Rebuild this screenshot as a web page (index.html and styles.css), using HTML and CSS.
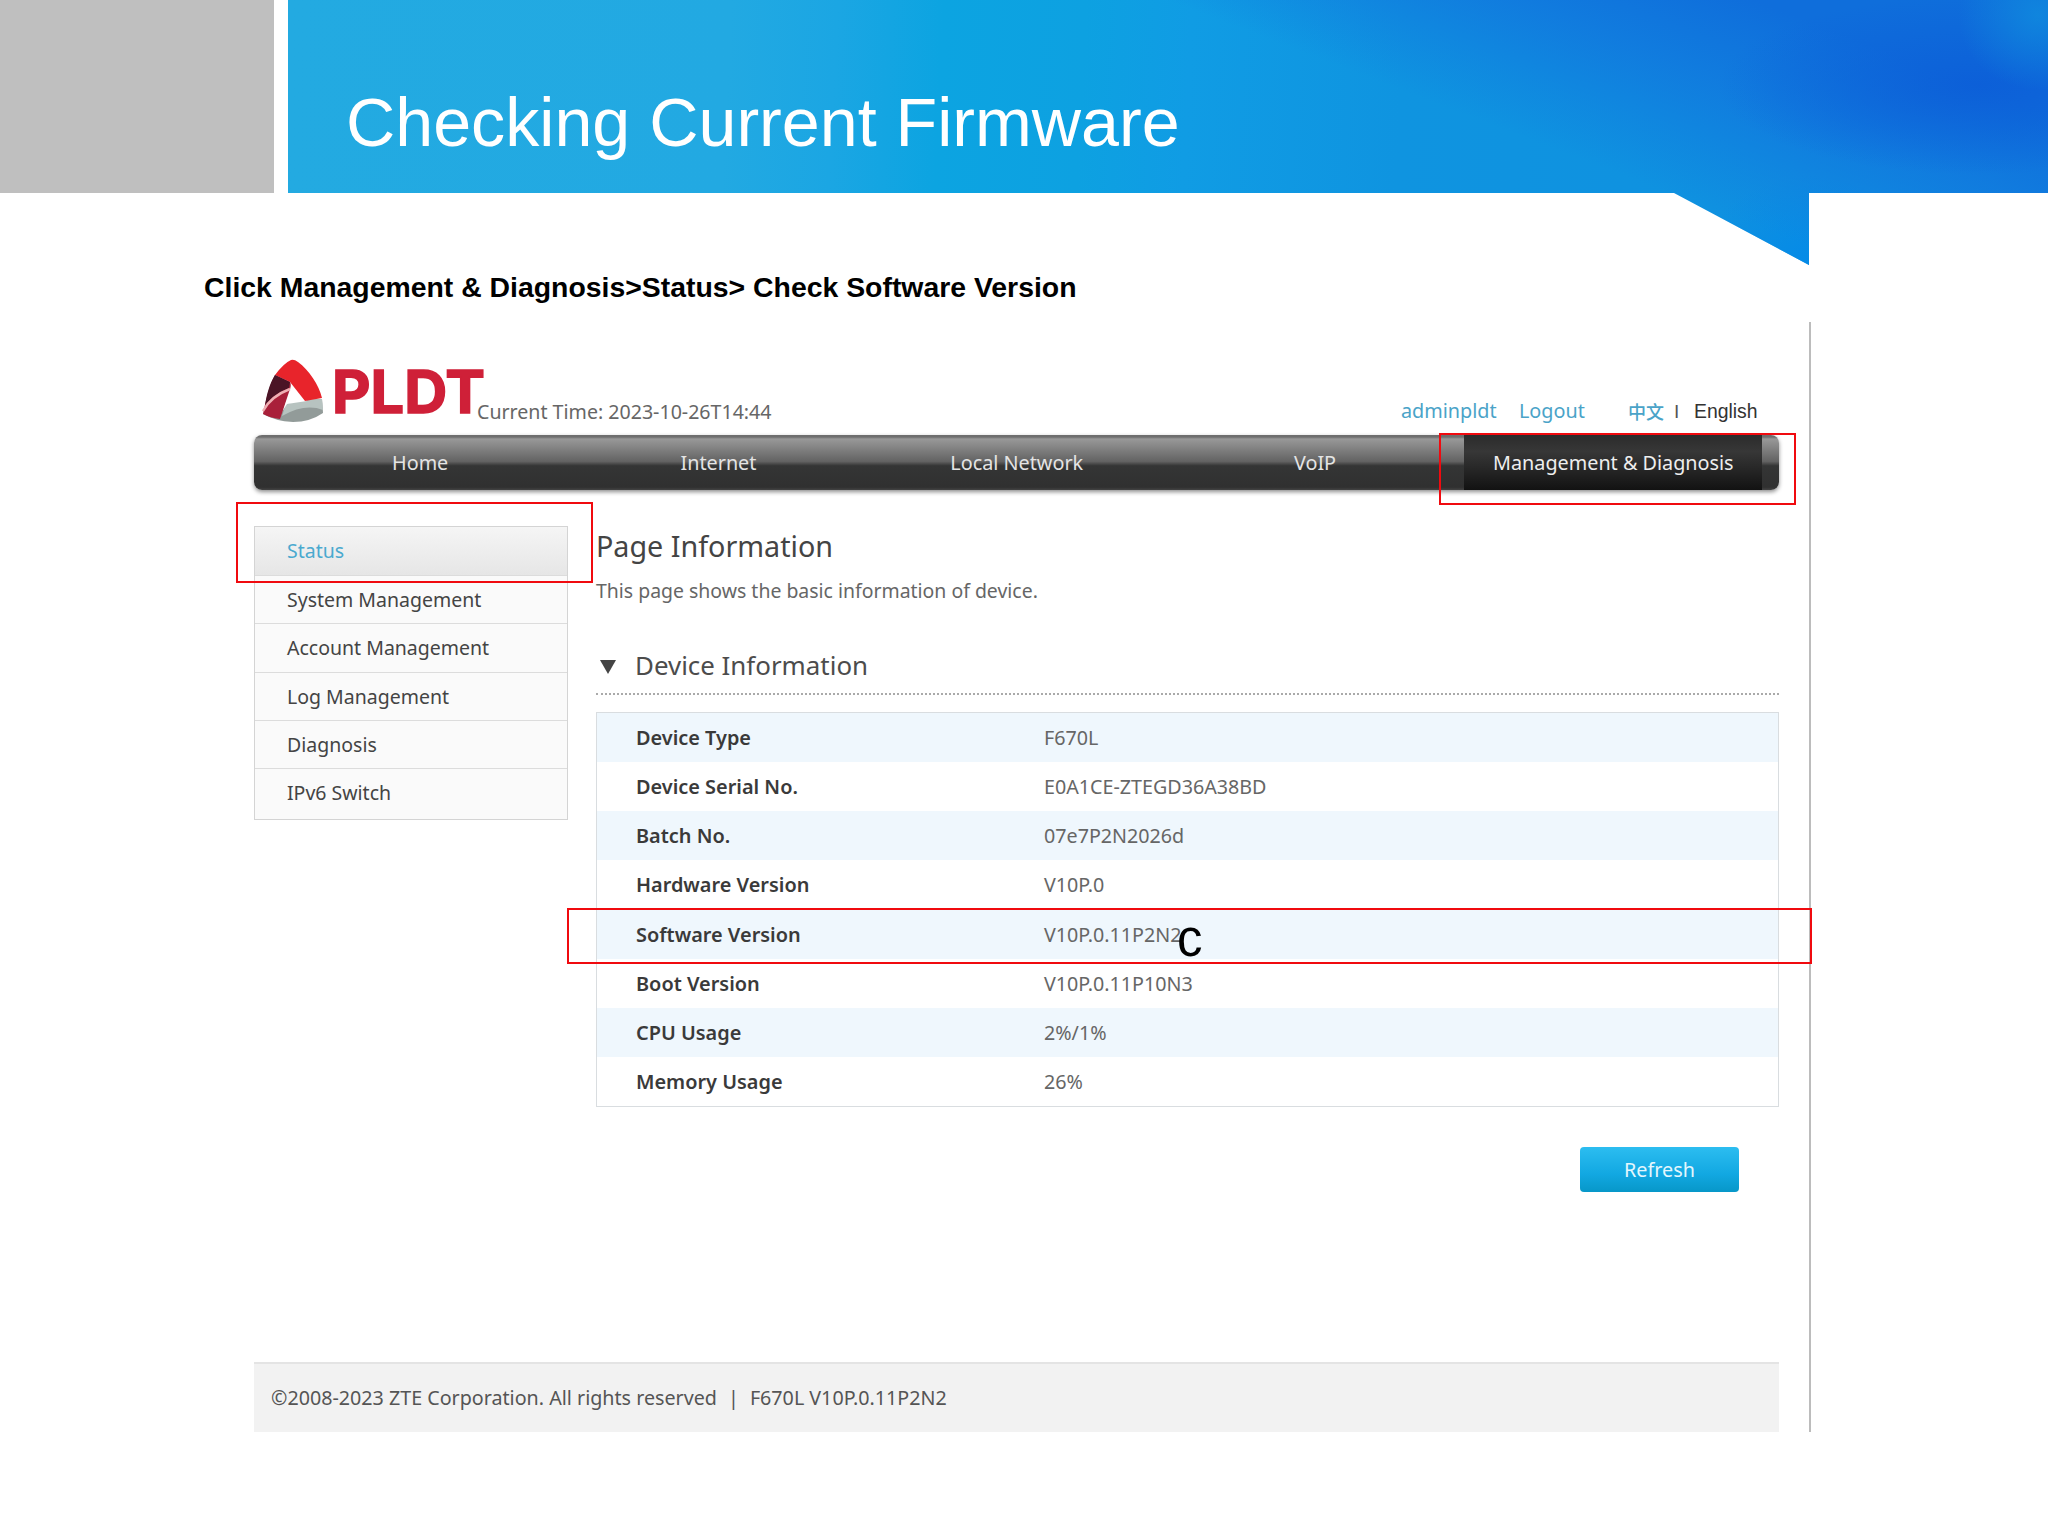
FILE: index.html
```
<!DOCTYPE html>
<html lang="en">
<head>
<meta charset="utf-8">
<title>Checking Current Firmware</title>
<link rel="stylesheet" href="styles.css">
</head>
<body>
<div class="slide">
  <header class="slide-header">
    <div class="gray-block"></div>
    <div class="banner"><h1>Checking Current Firmware</h1></div>
  </header>
  <p class="instruction">Click Management &amp; Diagnosis&gt;Status&gt; Check Software Version</p>

  <section class="router">
    <div class="topbar">
      <svg class="logo" width="224" height="70" viewBox="0 0 224 70">
        <path d="M3 58L20 45L62 43L63 57Q50 66 33 66Q15 65 3 58Z" fill="#929b99"/>
        <path d="M26 48Q42 44 62 43L63 54Q45 47 22 60Z" fill="#b7c3c0"/>
        <path d="M22 56L27 40L32 30L47 45L27 48Z" fill="#fff"/>
        <path d="M15 19Q24 7 31 4Q34 3 38 6C49 14 59 29 62 42L45 45L30 26Z" fill="#e8242b"/>
        <path d="M15 19L30 26Q32 29 29 36L20 63Q10 62 3 58C6 44 9 30 15 19Z" fill="#a9203a"/>
        <path d="M15 19L30 26L29 32Q15 37 5 49C7 38 9 29 15 19Z" fill="#4b1426"/>
        <path d="M3 55Q11 40 30 33" fill="none" stroke="#eeb0b4" stroke-width="2.5"/>
        <text class="logo-text" x="72" y="57" textLength="153" lengthAdjust="spacingAndGlyphs">PLDT</text>
      </svg>
      <span class="time">Current Time: 2023-10-26T14:44</span>
      <div class="links">
        <a>adminpldt</a><a>Logout</a><a class="zh">中文</a><span class="sep">I</span><span class="en">English</span>
      </div>
    </div>
    <nav class="nav">
      <span>Home</span><span>Internet</span><span>Local Network</span><span>VoIP</span><span class="active">Management &amp; Diagnosis</span>
    </nav>
    <div class="main">
      <ul class="side">
        <li class="current">Status</li>
        <li>System Management</li>
        <li>Account Management</li>
        <li>Log Management</li>
        <li>Diagnosis</li>
        <li>IPv6 Switch</li>
      </ul>
      <div class="content">
        <h2>Page Information</h2>
        <p class="desc">This page shows the basic information of device.</p>
        <h3><svg width="16" height="14" viewBox="0 0 16 14"><path d="M0 0H16L8 14Z" fill="#444"/></svg>Device Information</h3>
        <dl class="info">
          <div><dt>Device Type</dt><dd>F670L</dd></div>
          <div><dt>Device Serial No.</dt><dd>E0A1CE-ZTEGD36A38BD</dd></div>
          <div><dt>Batch No.</dt><dd>07e7P2N2026d</dd></div>
          <div><dt>Hardware Version</dt><dd>V10P.0</dd></div>
          <div><dt>Software Version</dt><dd>V10P.0.11P2N2</dd></div>
          <div><dt>Boot Version</dt><dd>V10P.0.11P10N3</dd></div>
          <div><dt>CPU Usage</dt><dd>2%/1%</dd></div>
          <div><dt>Memory Usage</dt><dd>26%</dd></div>
        </dl>
        <button class="refresh">Refresh</button>
      </div>
    </div>
    <footer class="foot"><span>©2008-2023 ZTE Corporation. All rights reserved</span><span class="bar">|</span><span>F670L V10P.0.11P2N2</span></footer>
  </section>

  <div class="mark mark-nav"></div>
  <div class="mark mark-status"></div>
  <div class="mark mark-version"></div>
  <span class="suffix">c</span>
</div>
</body>
</html>
```
FILE: styles.css
```
* { box-sizing: border-box; }
body { margin: 0; background: #fff; }
h1, h2, h3, p, ul, dl, dd { margin: 0; padding: 0; font-weight: 400; }
ul { list-style: none; }

.slide {
  position: relative;
  width: 2048px;
  height: 1536px;
  overflow: hidden;
  background: #fff;
  font-family: "Liberation Sans", Arial, sans-serif;
}

.slide-header { display: flex; gap: 14px; height: 265px; }
.gray-block { width: 274px; height: 193px; background: #bfbfbf; }
.banner {
  flex: 1;
  padding: 82px 0 0 58px;
  clip-path: polygon(0 0, 1760px 0, 1760px 193px, 1521px 193px, 1521px 265px, 1386px 193px, 0 193px);
  background:
    radial-gradient(ellipse 80px 75px at 1750px 15px, rgba(16,136,222,.9), rgba(16,136,222,0)),
    radial-gradient(ellipse 260px 90px at 1690px 85px, rgba(12,94,216,.9), rgba(12,94,216,0)),
    linear-gradient(21deg, rgba(16,112,220,0) 64%, rgba(17,120,222,.85) 78%, #0f6edb 88%),
    radial-gradient(ellipse 110px 90px at 1522px 265px, rgba(4,138,232,.9), rgba(4,138,232,0)),
    linear-gradient(93deg, #23aae1 0, #22a9e2 25%, #1ba6e3 31%, #0ca4e1 37%, #0da1e1 45%, #109ce4 51%, #0f94e0 63%, #0f92e0 76%, #0f8de0 100%);
}
.banner h1 { font-size: 68.2px; line-height: 80px; color: #fff; white-space: nowrap; }

.instruction {
  height: 57px;
  padding: 5px 0 0 204px;
  font-size: 28.4px;
  line-height: 34px;
  font-weight: 700;
  color: #000;
}

.router {
  display: flex;
  flex-direction: column;
  width: 1557px;
  height: 1110px;
  margin-left: 254px;
  padding-right: 30px;
  border-right: 2px solid #bcbcbc;
  font-family: "Noto Sans", "Noto Sans CJK SC", sans-serif;
  font-size: 19.8px;
  line-height: 28px;
  color: #555;
}

.topbar { display: flex; align-items: flex-end; height: 113px; padding-bottom: 9px; }
.logo { display: block; margin-left: 6px; overflow: visible; }
.logo-text { font-family: "Inter", sans-serif; font-weight: 700; font-size: 59px; fill: #cf2038; stroke: #cf2038; stroke-width: 1.5px; }
.time { margin-left: -7px; font-size: 19.6px; color: #666; }
.links {
  display: grid;
  grid-template-columns: 118px 109px 46px 20px 85px;
  margin-left: auto;
  color: #4aa3c8;
}
.links .zh { font-family: "Noto Sans CJK SC", sans-serif; font-size: 18px; font-weight: 500; }
.links .sep { padding-top: 1px; font: 19px/28px "Liberation Sans", sans-serif; color: #555; }
.links .en { font-family: "Liberation Sans", sans-serif; font-size: 19.4px; color: #333; }

.nav {
  display: grid;
  grid-template-columns: repeat(5, 298.3px);
  height: 55px;
  padding: 0 17px;
  border-radius: 8px;
  background: linear-gradient(#6e6e6e 0, #6e6e6e 2px, #989898 4px, #636363 48%, #343535 56%, #303030 95%, #444);
  box-shadow: 0 2px 4px rgba(0,0,0,.45);
  color: #e4e4e4;
  text-align: center;
  line-height: 55px;
}
.nav .active { background: linear-gradient(#2b2b2b, #373737 30%, #2a2a2a 55%, #121212); color: #eee; }

.main { display: flex; gap: 28px; margin-top: 36px; }
.side {
  display: grid;
  grid-template-rows: 49px 48px 49px 48px 48px 50px;
  width: 314px;
  height: 294px;
  border: 1px solid #d4d4d4;
  background: #fafafa;
  color: #444;
  line-height: 47px;
}
.side li { padding-left: 32px; border-bottom: 1px solid #dcdcdc; font-size: 19.5px; }
.side li:last-child { border-bottom: 0; }
.side .current { background: linear-gradient(#f5f5f5, #e6e6e6); color: #4aa9cf; line-height: 47px; }

.content { display: flex; flex-direction: column; flex: 1; }
.content h2 { font-size: 28.7px; line-height: 40px; color: #444; }
.desc { margin-top: 11px; font-size: 19.45px; color: #666; }
.content h3 {
  display: flex;
  align-items: center;
  gap: 19px;
  height: 48px;
  margin-top: 42px;
  padding: 0 0 11px 4px;
  border-bottom: 2px dotted #aaa;
  font-size: 25.9px;
  line-height: 36px;
  color: #4c4c4c;
}
.content h3 svg { position: relative; top: 2px; }
.info { margin-top: 17px; border: 1px solid #d9dde0; }
.info div { display: flex; height: 49.15px; padding-left: 39px; line-height: 49.15px; }
.info div:nth-child(odd) { background: #eff7fd; }
.info dt { width: 408px; font-weight: 600; font-size: 19.9px; color: #3a3a3a; }
.info dd { font-size: 19.7px; color: #666; }
.refresh {
  align-self: flex-end;
  width: 159px;
  height: 45px;
  margin: 40px 40px 0 0;
  padding: 0;
  border: 0;
  border-radius: 4px;
  background: linear-gradient(#2cbdf0, #12a8e2 60%, #0797c8);
  color: #e4f7fd;
  font: inherit;
}

.foot {
  display: flex;
  height: 70px;
  margin-top: auto;
  padding-left: 17px;
  border-top: 2px solid #e4e4e4;
  background: #f2f2f2;
  line-height: 67px;
  font-size: 19.7px;
}
.foot .bar { width: 33px; text-align: center; }

.mark { position: absolute; border: 2px solid #f00a0f; }
.mark-nav { left: 1439px; top: 433px; width: 357px; height: 72px; }
.mark-status { left: 236px; top: 502px; width: 357px; height: 81px; }
.mark-version { left: 567px; top: 908px; width: 1245px; height: 56px; }
.suffix { position: absolute; left: 1177px; top: 914px; font-size: 51px; line-height: 50px; color: #000; }
```
